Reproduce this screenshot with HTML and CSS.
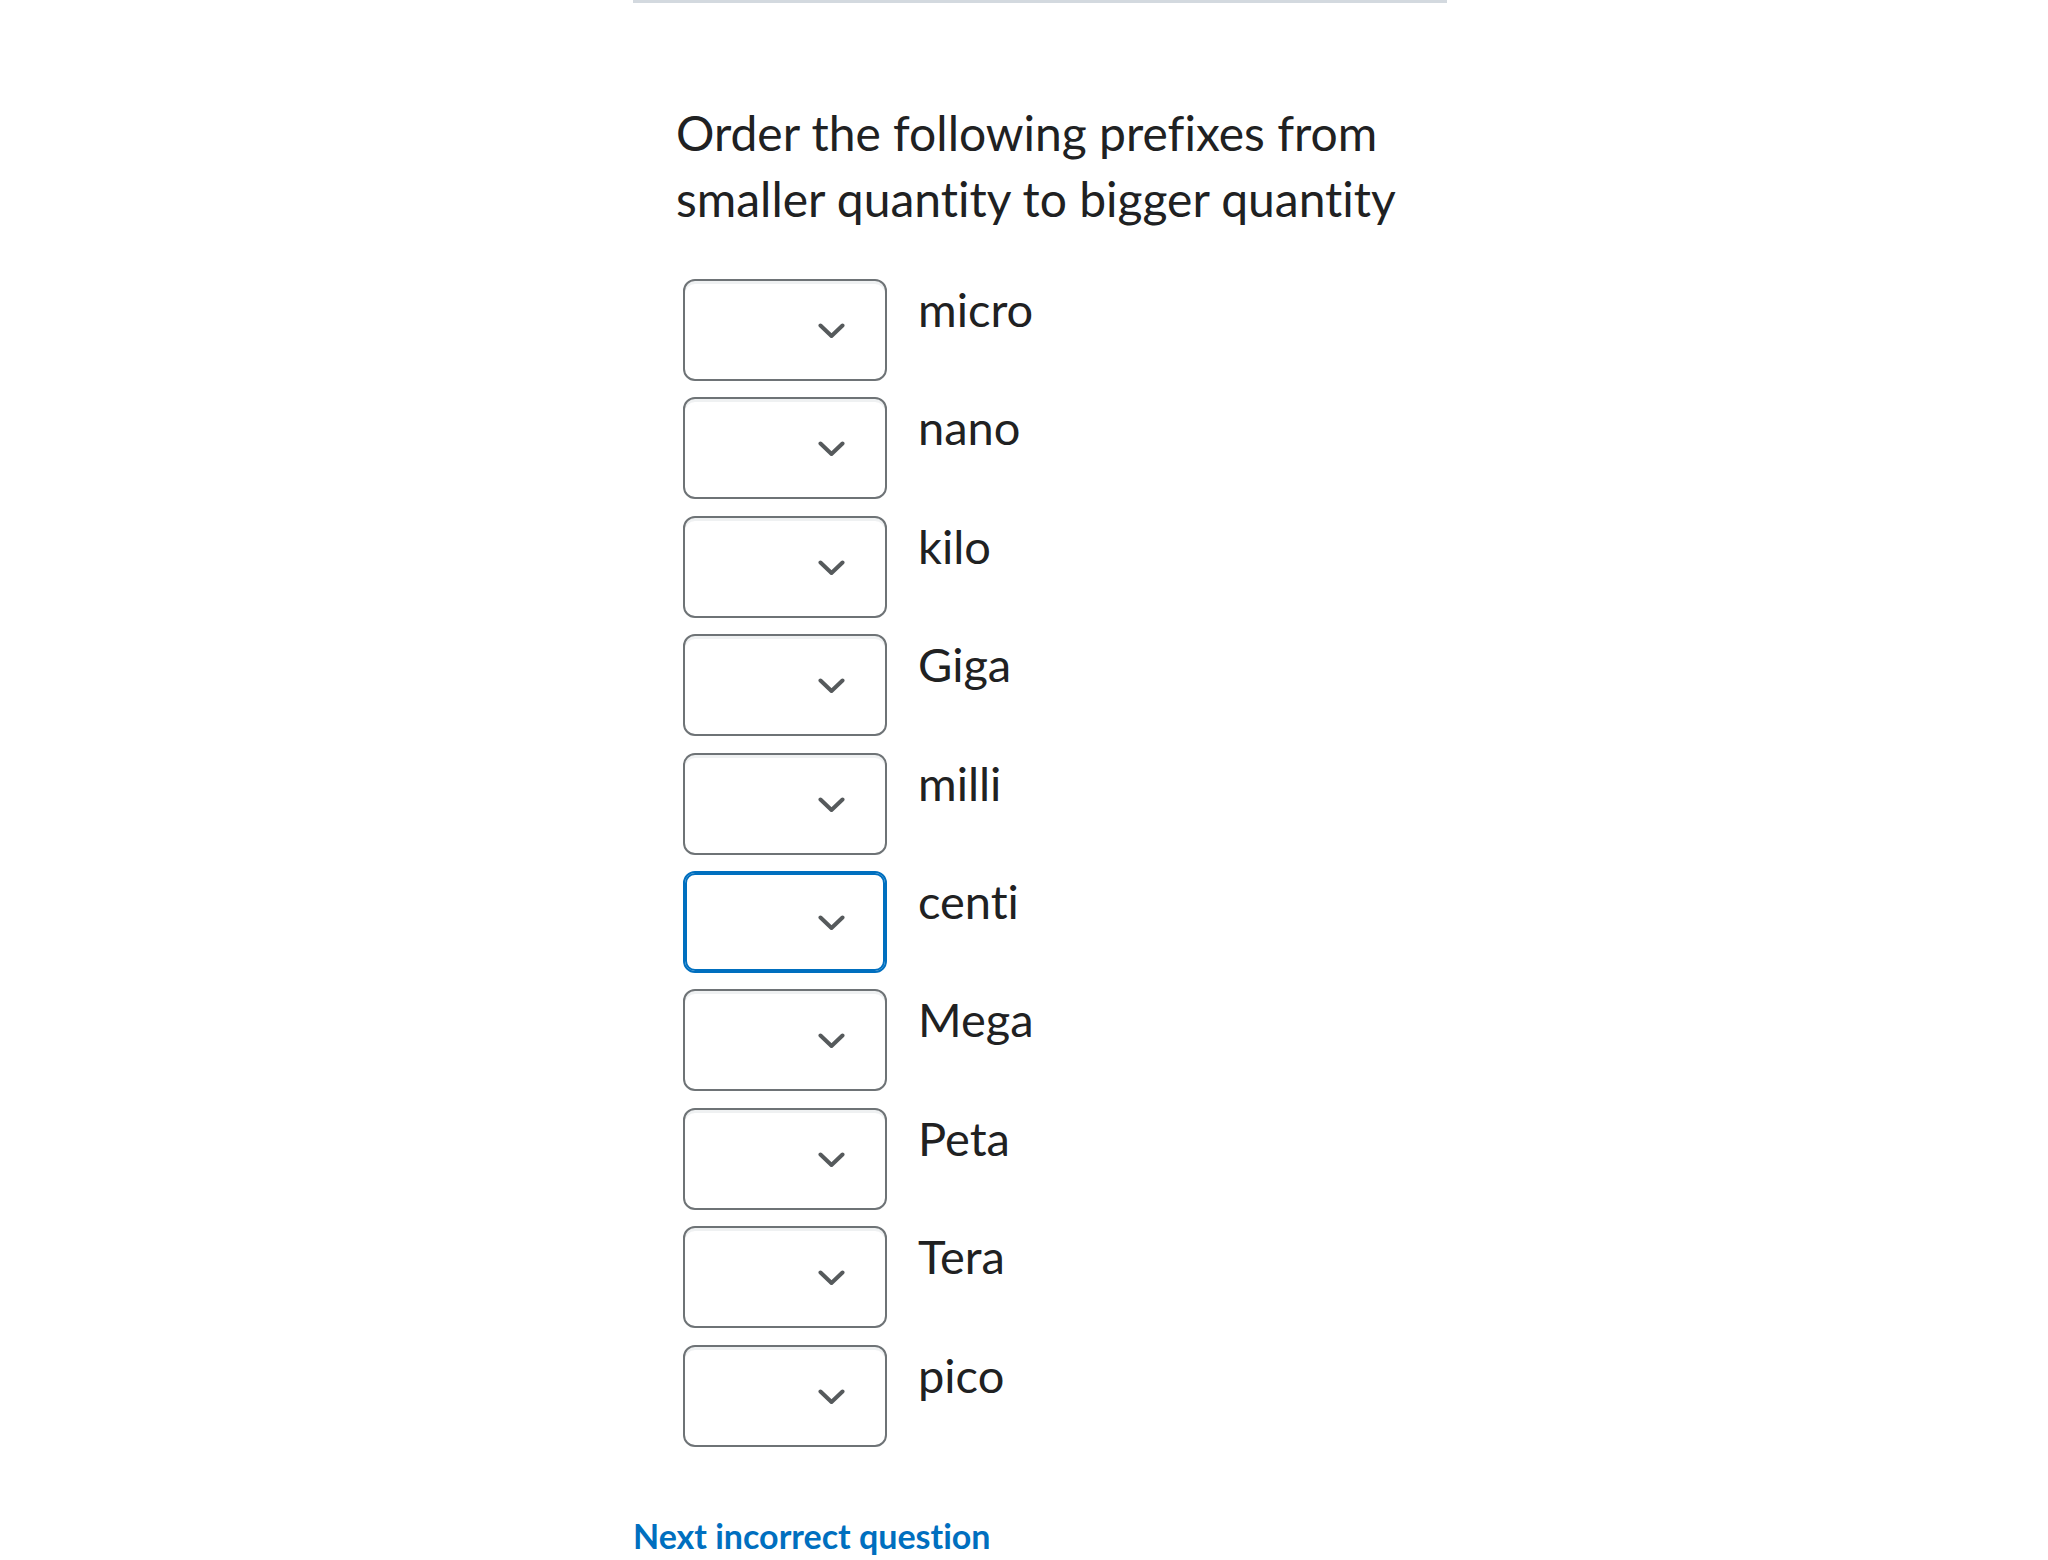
FILE: index.html
```html
<!DOCTYPE html>
<html lang="en">
<head>
    <meta charset="UTF-8">
    <meta name="viewport" content="width=device-width, initial-scale=1.0">
    <title>Ordering question</title>
    <link rel="stylesheet" href="styles.css">
</head>
<body>

    <div class="question">
        <!-- Текст вопроса -->
        <p class="question-text">Order the following prefixes from smaller quantity to bigger quantity</p>

        <!-- Список для упорядочивания -->
        <div class="order-list">
            <div class="order-row">
                <div class="select-wrap">
                    <select class="order-select"><option></option></select>
                    <svg class="chevron" width="27" height="16" viewBox="0 0 27 16"><path d="M2.5 2.5 L13.5 13 L24.5 2.5"/></svg>
                </div>
                <span class="order-label">micro</span>
            </div>
            <div class="order-row">
                <div class="select-wrap">
                    <select class="order-select"><option></option></select>
                    <svg class="chevron" width="27" height="16" viewBox="0 0 27 16"><path d="M2.5 2.5 L13.5 13 L24.5 2.5"/></svg>
                </div>
                <span class="order-label">nano</span>
            </div>
            <div class="order-row">
                <div class="select-wrap">
                    <select class="order-select"><option></option></select>
                    <svg class="chevron" width="27" height="16" viewBox="0 0 27 16"><path d="M2.5 2.5 L13.5 13 L24.5 2.5"/></svg>
                </div>
                <span class="order-label">kilo</span>
            </div>
            <div class="order-row">
                <div class="select-wrap">
                    <select class="order-select"><option></option></select>
                    <svg class="chevron" width="27" height="16" viewBox="0 0 27 16"><path d="M2.5 2.5 L13.5 13 L24.5 2.5"/></svg>
                </div>
                <span class="order-label">Giga</span>
            </div>
            <div class="order-row">
                <div class="select-wrap">
                    <select class="order-select"><option></option></select>
                    <svg class="chevron" width="27" height="16" viewBox="0 0 27 16"><path d="M2.5 2.5 L13.5 13 L24.5 2.5"/></svg>
                </div>
                <span class="order-label">milli</span>
            </div>
            <div class="order-row">
                <div class="select-wrap">
                    <select class="order-select focused"><option></option></select>
                    <svg class="chevron" width="27" height="16" viewBox="0 0 27 16"><path d="M2.5 2.5 L13.5 13 L24.5 2.5"/></svg>
                </div>
                <span class="order-label">centi</span>
            </div>
            <div class="order-row">
                <div class="select-wrap">
                    <select class="order-select"><option></option></select>
                    <svg class="chevron" width="27" height="16" viewBox="0 0 27 16"><path d="M2.5 2.5 L13.5 13 L24.5 2.5"/></svg>
                </div>
                <span class="order-label">Mega</span>
            </div>
            <div class="order-row">
                <div class="select-wrap">
                    <select class="order-select"><option></option></select>
                    <svg class="chevron" width="27" height="16" viewBox="0 0 27 16"><path d="M2.5 2.5 L13.5 13 L24.5 2.5"/></svg>
                </div>
                <span class="order-label">Peta</span>
            </div>
            <div class="order-row">
                <div class="select-wrap">
                    <select class="order-select"><option></option></select>
                    <svg class="chevron" width="27" height="16" viewBox="0 0 27 16"><path d="M2.5 2.5 L13.5 13 L24.5 2.5"/></svg>
                </div>
                <span class="order-label">Tera</span>
            </div>
            <div class="order-row">
                <div class="select-wrap">
                    <select class="order-select"><option></option></select>
                    <svg class="chevron" width="27" height="16" viewBox="0 0 27 16"><path d="M2.5 2.5 L13.5 13 L24.5 2.5"/></svg>
                </div>
                <span class="order-label">pico</span>
            </div>
        </div>

        <a class="next-link" href="#">Next incorrect question</a>
    </div>

</body>
</html>
```

FILE: styles.css
```css
body {
    margin: 0;
    background-color: white;
    color: #202122;
    font-family: Lato, "Open Sans", sans-serif;
    font-variant-ligatures: none;
}

.question {
    width: 814px;
    margin-left: 633px;
    border-top: 3px solid #d3d9df;
}

.question-text {
    margin: 97px 0 0 0;
    padding-left: 43px;
    font-size: 48px;
    line-height: 66px;
}

.order-list {
    display: flex;
    flex-direction: column;
    gap: 16.4px;
    margin-top: 47px;
    padding-left: 50px;
}

.order-row {
    display: flex;
    align-items: flex-start;
}

.select-wrap {
    position: relative;
    width: 204px;
    height: 102px;
    flex-shrink: 0;
}

.order-select {
    appearance: none;
    -webkit-appearance: none;
    width: 100%;
    height: 100%;
    margin: 0;
    background-color: white;
    border: 2px solid #6e7376;
    border-radius: 12px;
    box-shadow: inset 0 3px 0 0 rgba(177, 185, 190, 0.2);
    outline: none;
}

.order-select.focused {
    border-color: #006fbf;
    box-shadow: inset 0 0 0 2px #006fbf;
}

.chevron {
    position: absolute;
    left: 135px;
    top: 44px;
    pointer-events: none;
}

.chevron path {
    fill: none;
    stroke: #565a5c;
    stroke-width: 4;
    stroke-linecap: round;
    stroke-linejoin: round;
}

.order-label {
    margin-top: -3px;
    margin-left: 31px;
    font-size: 47px;
    line-height: 66px;
}

.next-link {
    display: inline-block;
    margin-top: 65px;
    font-size: 34px;
    line-height: 48px;
    font-weight: 700;
    color: #006fbf;
    text-decoration: none;
}
```
